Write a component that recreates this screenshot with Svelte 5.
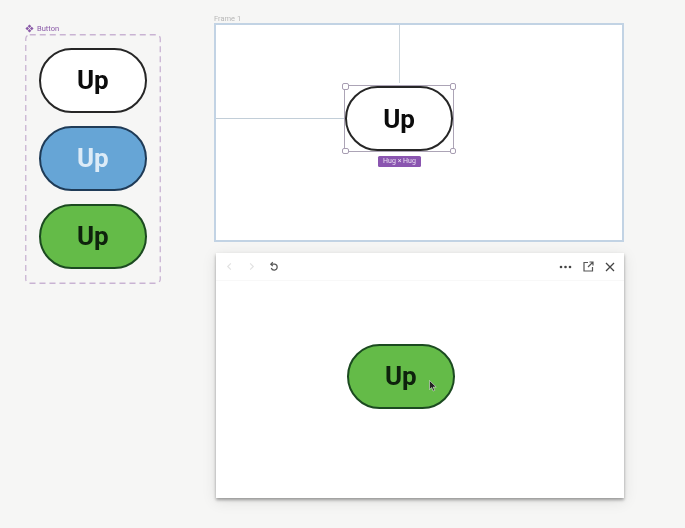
<script>
  const variants = ['white', 'blue', 'green'];
</script>

<div class="canvas">
  <section class="set">
    <div class="set-label">
      <svg width="9" height="9" viewBox="0 0 10 10"><path d="M5 0.500 7 2.500 5 4.500 3 2.500ZM2.500 3 4.500 5 2.500 7 0.500 5ZM7.500 3 9.500 5 7.500 7 5.500 5ZM5 5.500 7 7.500 5 9.500 3 7.500Z" fill="#8a5aa8"/></svg>
      <span>Button</span>
    </div>
    <div class="set-box">
      <svg class="dashes" width="136" height="250" viewBox="0 0 136 250" fill="none"><rect x="0.750" y="0.750" width="134.500" height="248.500" rx="4" stroke="#c9b3d3" stroke-width="1.300" stroke-dasharray="6 4"/></svg>
      {#each variants as v}
        <div class="btn {v}">Up</div>
      {/each}
    </div>
  </section>

  <section class="frame-wrap">
    <div class="frame-label">Frame 1</div>
    <div class="frame">
      <div class="guide-v"></div>
      <div class="guide-h"></div>
      <div class="selection">
        <div class="btn white sel">Up</div>
        <i class="handle tl"></i><i class="handle tr"></i><i class="handle bl"></i><i class="handle br"></i>
        <div class="hug">Hug × Hug</div>
      </div>
    </div>
  </section>

  <section class="preview">
    <header class="toolbar">
      <div class="tools">
        <svg width="9" height="9" viewBox="0 0 10 10" fill="none" stroke="#e2e2e2" stroke-width="1.300"><path d="M6.500 1.500 3 5l3.500 3.500"/></svg>
        <svg width="9" height="9" viewBox="0 0 10 10" fill="none" stroke="#e2e2e2" stroke-width="1.300"><path d="M3.500 1.500 7 5 3.500 8.500"/></svg>
        <svg width="10" height="11" viewBox="0 0 10 11" fill="none" stroke="#555" stroke-width="1.200"><path d="M2.200 3.200h3.600a3 3 0 1 1-3.500 3.800M3.800 1.200 1.800 3.200l2 1.900"/></svg>
      </div>
      <div class="tools right">
        <svg width="13" height="4" viewBox="0 0 13 4" fill="#444"><circle cx="2" cy="2" r="1.300"/><circle cx="6.500" cy="2" r="1.300"/><circle cx="11" cy="2" r="1.300"/></svg>
        <svg width="11" height="11" viewBox="0 0 11 11" fill="none" stroke="#555" stroke-width="1.200"><path d="M5 1.500H1v8.500h8.500V6M6.500 1h3.500v3.500M10 1 5 6"/></svg>
        <svg width="10" height="10" viewBox="0 0 10 10" fill="none" stroke="#444" stroke-width="1.300"><path d="M1 1l8 8M9 1 1 9"/></svg>
      </div>
    </header>
    <div class="stage">
      <div class="btn green">Up
        <svg class="cursor" width="8" height="12" viewBox="0 0 8 12"><path d="M0.500 0.500v9l2.200-2 1.500 3.500 1.500-.6-1.500-3.400h3Z" fill="#222" stroke="#fff" stroke-width=".5"/></svg>
      </div>
    </div>
  </section>
</div>

<style>
  :global(body) { margin: 0; background: #f6f6f5; }
  .canvas {
    position: relative;
    width: 685px;
    height: 528px;
    overflow: hidden;
    background: #f6f6f5;
    font-family: Roboto, "Liberation Sans", sans-serif;
    filter: blur(0.35px);
  }
  .btn {
    position: relative;
    box-sizing: border-box;
    width: 107.500px;
    height: 64.500px;
    display: flex;
    align-items: center;
    justify-content: center;
    border: 2px solid #262626;
    border-radius: 33px;
    font-size: 26px;
    font-weight: 700;
    letter-spacing: -0.2px;
    color: #0c0c0c;
    flex: none;
  }
  .white { background: #fff; }
  .blue { background: #66a5d6; border-color: #1f3b57; color: #dcebf7; }
  .green { background: #64bb48; border-color: #1b4a20; color: #0e220d; }

  .set { position: absolute; left: 25px; top: 23px; }
  .set-label {
    display: flex;
    align-items: center;
    gap: 3px;
    height: 11px;
    font-size: 7.500px;
    color: #8a5aa8;
  }
  .set-box {
    position: relative;
    box-sizing: border-box;
    width: 136px;
    height: 250px;
    padding: 14px;
    display: flex;
    flex-direction: column;
    align-items: flex-start;
    gap: 13.500px;
  }
  .dashes { position: absolute; left: 0; top: 0; }
  .frame-wrap { position: absolute; left: 214px; top: 14px; }
  .frame-label { height: 9px; font-size: 7.500px; line-height: 9px; color: #b8b8b8; }
  .frame {
    position: relative;
    box-sizing: border-box;
    width: 410px;
    height: 219px;
    background: #fff;
    border: 2px solid #c2d3e4;
  }
  .guide-v {
    position: absolute;
    left: 182.500px;
    top: 0;
    width: 1px;
    height: 58px;
    background: #ccd5dc;
  }
  .guide-h {
    position: absolute;
    left: 0;
    top: 92.500px;
    width: 129px;
    height: 1px;
    background: #c2ced8;
  }
  .selection {
    position: absolute;
    left: 129px;
    top: 61px;
    width: 108px;
    height: 65px;
    outline: 1px solid #aca4b6;
  }
  .selection .btn { width: 108px; height: 65px; }
  .handle {
    position: absolute;
    box-sizing: border-box;
    width: 6.500px;
    height: 6.500px;
    background: #fff;
    border: 1px solid #a79db2;
    border-radius: 2px;
  }
  .tl { left: -3px; top: -3px; }
  .tr { right: -3px; top: -3px; }
  .bl { left: -3px; bottom: -3px; }
  .br { right: -3px; bottom: -3px; }
  .hug {
    position: absolute;
    left: 33px;
    top: 70px;
    width: 43px;
    height: 11px;
    background: #8a55b0;
    border-radius: 1.500px;
    color: #eadff2;
    font-size: 7px;
    line-height: 11px;
    text-align: center;
    white-space: nowrap;
  }
  .preview {
    position: absolute;
    left: 216px;
    top: 253px;
    width: 408px;
    height: 245px;
    background: #fff;
    box-shadow: 0 2px 3px rgba(0, 0, 0, 0.35), 0 3px 14px rgba(0, 0, 0, 0.1);
    display: flex;
    flex-direction: column;
  }
  .toolbar {
    box-sizing: border-box;
    height: 28px;
    padding: 0 9px;
    display: flex;
    align-items: center;
    justify-content: space-between;
    border-bottom: 1px solid #f8f8f8;
  }
  .tools { display: flex; align-items: center; gap: 13px; }
  .tools.right { gap: 11px; }
  .stage {
    flex: 1;
    display: flex;
    align-items: flex-start;
    padding: 63px 0 0 131px;
  }
  .cursor { position: absolute; left: 80px; top: 34px; }
</style>
